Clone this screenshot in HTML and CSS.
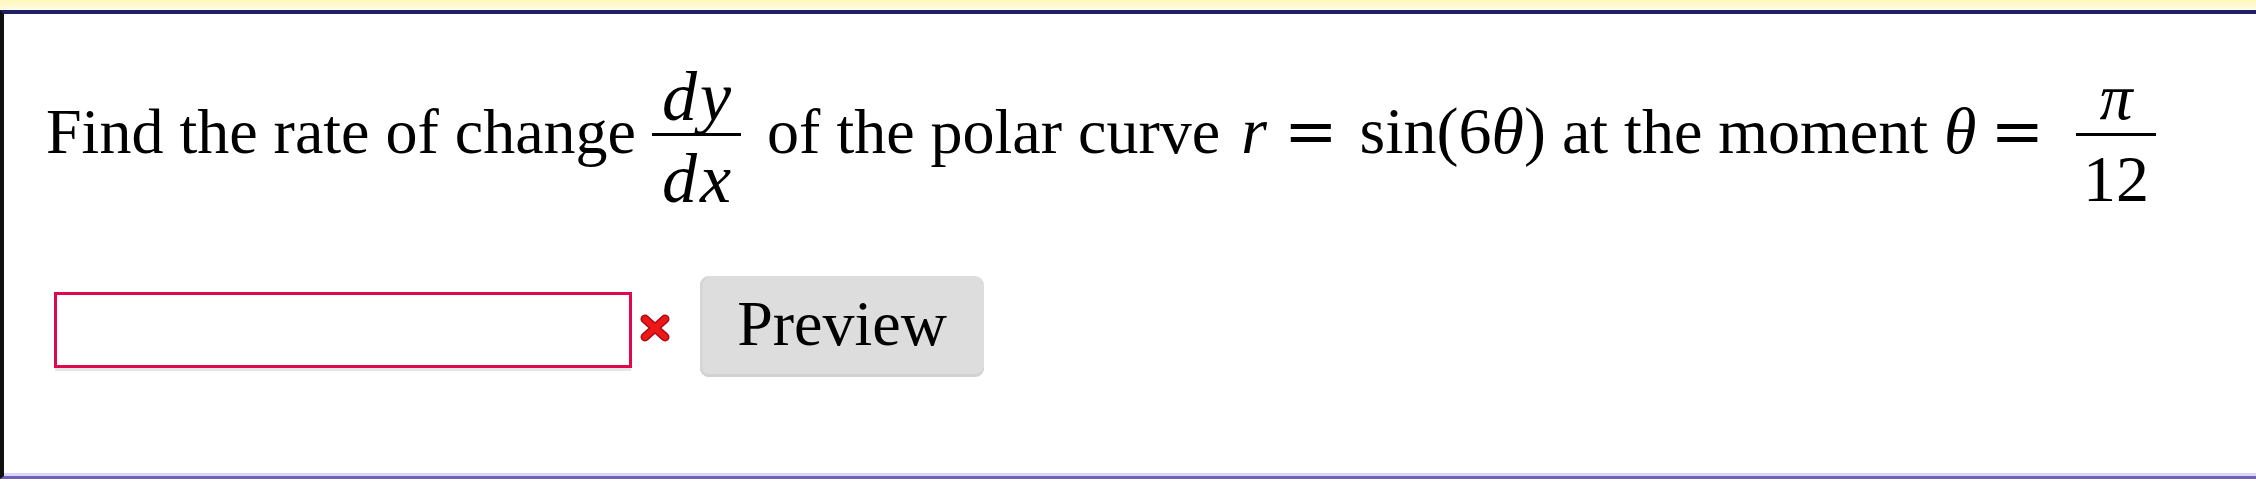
FILE: index.html
```html
<!DOCTYPE html>
<html>
<head>
<meta charset="utf-8">
<link rel="stylesheet" href="styles.css">
</head>
<body>
<div class="topstrip"></div>
<div class="problem">
  <p class="question">Find the rate of change <span class="frac frac-d"><span class="num"><i>dy</i></span><span class="bar"></span><span class="den"><i>dx</i></span></span> of the polar curve <span class="math"><i class="var-r">r</i><span class="eq eq-1">=</span>sin(6<i>θ</i>)</span> at the moment <span class="math"><i>θ</i><span class="eq eq-2">=</span></span><span class="frac frac-pi"><span class="num"><i>π</i></span><span class="bar"></span><span class="den">12</span></span></p>
  <div class="answer-row">
    <input class="answer" type="text" aria-label="answer">
    <svg class="wrong" width="30" height="28" viewBox="0 0 30 28" aria-hidden="true">
      <path d="M5 5 L25 23 M25 5 L5 23" stroke="#a80818" stroke-width="9" stroke-linecap="round"/>
      <path d="M5 5 L25 23 M25 5 L5 23" stroke="#ec1818" stroke-width="6" stroke-linecap="round"/>
    </svg>
    <button class="preview" type="button">Preview</button>
  </div>
</div>
</body>
</html>
```
FILE: styles.css
```css
html, body {
  margin: 0;
  padding: 0;
  background: #ffffff;
  overflow: hidden;
}

.topstrip {
  height: 10px;
  background: linear-gradient(#fff6bd, #fffbe0);
}

.problem {
  height: 469px;
  border-top: 4px solid #202068;
  border-left: 4px solid #111111;
  border-bottom: 3px solid #6e62b6;
  box-shadow: inset 0 -3px 0 #ddd2ff;
  box-sizing: border-box;
  padding: 52px 0 0 42px;
  font-family: "Liberation Serif", "Times New Roman", serif;
  color: #000;
}

.question {
  margin: 0;
  font-size: 64px;
  white-space: nowrap;
}

.question i {
  font-style: italic;
}

.math {
  white-space: nowrap;
  font-size: 66px;
}

.var-r {
  margin-left: 5px;
}

.eq {
  font-family: "DejaVu Serif", serif;
  font-size: 64px;
}

.eq-1 {
  margin: 0 22px 0 17px;
}

.eq-2 {
  margin: 0 30px 0 14px;
}

.frac {
  display: inline-flex;
  flex-direction: column;
  align-items: stretch;
  vertical-align: middle;
  text-align: center;
}

.frac .num,
.frac .den {
  display: block;
  line-height: 62px;
  height: 62px;
  font-size: 66px;
}

.frac .num {
  margin-bottom: 5px;
}

.frac .den {
  margin-top: 12px;
}

.frac .bar {
  display: block;
  height: 3px;
  background: #000;
}

.frac-d {
  margin: 0 10px 0 0;
}

.frac-d .num,
.frac-d .den {
  font-size: 70px;
  letter-spacing: 3px;
  padding: 0 7px 0 10px;
}

.frac-pi {
  margin: 0 4px 0 2px;
}

.frac-pi .num,
.frac-pi .den {
  padding: 0 7px;
}

.answer-row {
  display: flex;
  align-items: flex-start;
  margin-top: 66px;
}

.answer {
  box-sizing: border-box;
  width: 578px;
  height: 76px;
  margin: 16px 0 0 8px;
  border: 3px solid #e0084c;
  background: #fff;
  box-shadow: 0 4px 0 -1px #e6e6e6;
  outline: none;
  padding: 0;
}

.wrong {
  margin: 38px 0 0 8px;
}

.preview {
  box-sizing: border-box;
  width: 284px;
  height: 101px;
  margin-left: 30px;
  border: none;
  border-radius: 9px;
  background: #dddddd;
  box-shadow: inset 0 -3px 0 #d2d2d2, inset 3px 0 0 #d6d6d6;
  font-family: "Liberation Serif", "Times New Roman", serif;
  font-size: 64px;
  color: #000;
  padding: 0 0 6px 0;
}
```
